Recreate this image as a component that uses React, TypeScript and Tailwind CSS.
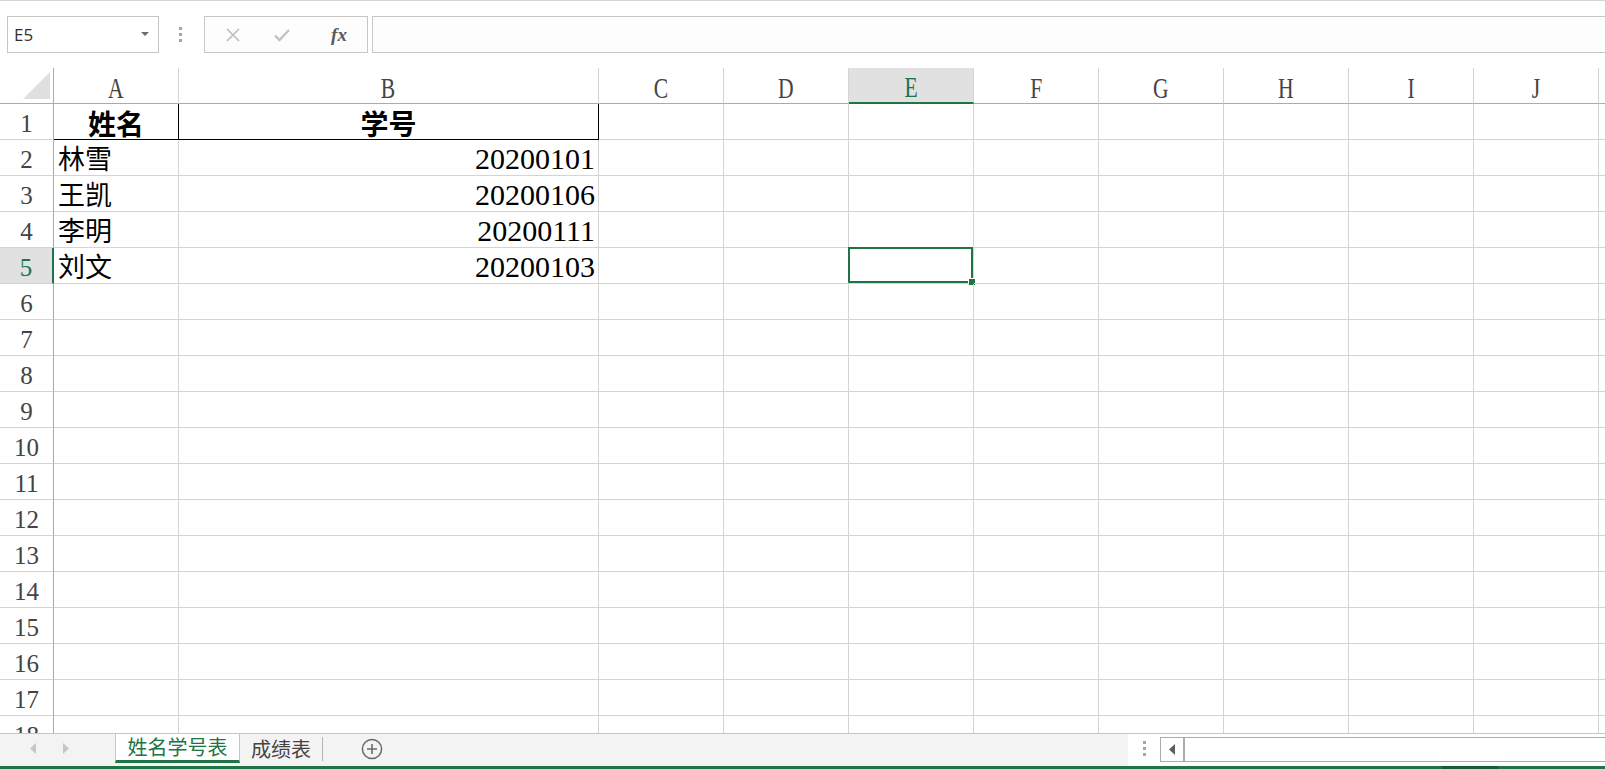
import React from 'react';

const COLUMNS = [
  { key: 'A', width: 'w-[125px]' },
  { key: 'B', width: 'w-[420px]' },
  { key: 'C', width: 'w-[125px]' },
  { key: 'D', width: 'w-[125px]' },
  { key: 'E', width: 'w-[125px]' },
  { key: 'F', width: 'w-[125px]' },
  { key: 'G', width: 'w-[125px]' },
  { key: 'H', width: 'w-[125px]' },
  { key: 'I', width: 'w-[125px]' },
  { key: 'J', width: 'w-[125px]' },
];

const STUDENTS = [
  { name: '林雪', id: '20200101' },
  { name: '王凯', id: '20200106' },
  { name: '李明', id: '20200111' },
  { name: '刘文', id: '20200103' },
];

const ROWS = Array.from({ length: 18 }, (_, i) => i + 1);
const ACTIVE_ROW = 5;
const ACTIVE_COL = 'E';

function FormulaBar() {
  return (
    <div className="h-[68px] shrink-0 border-t border-[#d5d5d5] flex items-start pt-[15px] bg-white">
      <div className="ml-[7px] w-[152px] h-[37px] shrink-0 border border-[#c6c6c6] flex items-center pl-[6px] pr-[9px]">
        <span className="flex-1 text-[17px] text-[#333] font-['Open_Sans',sans-serif] leading-none">E5</span>
        <svg width="8" height="5" viewBox="0 0 8 5">
          <polygon points="0,0 8,0 4,4" fill="#6d6d6d" />
        </svg>
      </div>
      <div className="w-[45px] h-[37px] shrink-0 flex flex-col items-center justify-center gap-[3px] pr-[3px]">
        <span className="w-[3px] h-[3px] bg-[#a6a6a6]" />
        <span className="w-[3px] h-[3px] bg-[#a6a6a6]" />
        <span className="w-[3px] h-[3px] bg-[#a6a6a6]" />
      </div>
      <div className="w-[164px] h-[37px] shrink-0 border border-[#c6c6c6] bg-[#fdfdfd] flex items-center">
        <div className="ml-[16px] w-[24px] flex justify-center">
          <svg width="16" height="16" viewBox="0 0 16 16">
            <path d="M2 2 L14 14 M14 2 L2 14" stroke="#bdbdbd" strokeWidth="1.6" fill="none" />
          </svg>
        </div>
        <div className="ml-[25px] w-[24px] flex justify-center">
          <svg width="18" height="16" viewBox="0 0 18 16">
            <path d="M2 8.5 L6.5 13 L16 3" stroke="#c2c2c2" strokeWidth="2.4" fill="none" />
          </svg>
        </div>
        <div className="ml-[33px] w-[24px] flex justify-center">
          <span className="font-['Liberation_Serif',serif] italic font-bold text-[19px] text-[#5a5a5a] leading-none">fx</span>
        </div>
      </div>
      <div className="ml-[4px] flex-1 h-[37px] border border-r-0 border-[#c6c6c6] bg-[#fdfdfd]" />
    </div>
  );
}

function ColumnHeader() {
  return (
    <div className="flex h-[36px] shrink-0">
      <div className="w-[54px] shrink-0 border-r border-b border-[#ababab] flex items-end justify-end pr-[3px] pb-[4px]">
        <svg width="27" height="27" viewBox="0 0 27 27">
          <polygon points="27,0 27,27 0,27" fill="#dfdfdf" />
        </svg>
      </div>
      {COLUMNS.map((c) => {
        const active = c.key === ACTIVE_COL;
        return (
          <div
            key={c.key}
            className={`${c.width} shrink-0 border-r border-r-[#d4d4d4] flex items-end justify-center overflow-hidden ${
              active ? 'bg-[#e1e1e1] border-b-2 border-b-[#217346] text-[#217346]' : 'border-b border-b-[#ababab] text-[#444]'
            }`}
          >
            <span className="font-['Liberation_Serif',serif] text-[30px] leading-none scale-x-[0.72]">{c.key}</span>
          </div>
        );
      })}
      <div className="flex-1 min-w-0 border-b border-[#ababab]" />
    </div>
  );
}

function Cell({ row, col }: { row: number; col: string }) {
  const header = row === 1 && (col === 'A' || col === 'B');
  const student = row >= 2 && row <= 5 ? STUDENTS[row - 2] : null;
  const base = `relative shrink-0 border-r border-b flex items-end overflow-visible ${
    header ? 'border-black' : 'border-[#d4d4d4]'
  }`;
  const width = COLUMNS.find((c) => c.key === col)!.width;

  let content: React.ReactNode = null;
  let align = '';
  if (header) {
    align = 'justify-center pb-[2px]';
    content = (
      <span className="font-['Noto_Sans_CJK_SC',sans-serif] font-bold text-[28px] leading-none text-black">
        {col === 'A' ? '姓名' : '学号'}
      </span>
    );
  } else if (student && col === 'A') {
    align = 'justify-start pl-[4px] pb-[4px]';
    content = (
      <span className="font-['Noto_Sans_CJK_SC',sans-serif] text-[27px] leading-none text-black">{student.name}</span>
    );
  } else if (student && col === 'B') {
    align = 'justify-end pr-[3px] pb-[1px]';
    content = (
      <span className="font-['Liberation_Serif',serif] text-[30px] leading-none text-black">{student.id}</span>
    );
  }

  const selected = row === ACTIVE_ROW && col === ACTIVE_COL;

  return (
    <div className={`${width} ${base} ${align}`}>
      {content}
      {selected && (
        <div className="absolute -left-px -top-px right-0 bottom-0 border-2 border-[#217346] pointer-events-none">
          <div className="absolute -right-[5px] -bottom-[5px] w-[8px] h-[8px] bg-[#217346] border border-white" />
        </div>
      )}
    </div>
  );
}

function SheetGrid() {
  return (
    <div className="flex-1 min-h-0 overflow-hidden flex flex-col bg-white">
      <ColumnHeader />
      {ROWS.map((r) => {
        const active = r === ACTIVE_ROW;
        return (
          <div key={r} className="flex h-[36px] shrink-0">
            <div
              className={`w-[54px] shrink-0 flex items-end justify-center pb-[3px] border-b border-b-[#d4d4d4] font-['Liberation_Serif',serif] text-[25px] leading-none ${
                active ? 'bg-[#e1e1e1] text-[#217346] border-r-2 border-r-[#217346]' : 'text-[#444] border-r border-r-[#ababab]'
              }`}
            >
              {r}
            </div>
            {COLUMNS.map((c) => (
              <Cell key={c.key} row={r} col={c.key} />
            ))}
            <div className="flex-1 min-w-0 border-b border-[#d4d4d4]" />
          </div>
        );
      })}
    </div>
  );
}

function SheetTabs() {
  return (
    <div className="h-[33px] shrink-0 border-t border-[#c6c6c6] bg-[#f3f3f3] flex items-start">
      <div className="w-[115px] h-[29px] shrink-0 flex items-center pl-[30px]">
        <svg width="6" height="11" viewBox="0 0 6 11">
          <polygon points="6,0 6,11 0,5.5" fill="#c6c6c6" />
        </svg>
        <svg width="6" height="11" viewBox="0 0 6 11" className="ml-[27px]">
          <polygon points="0,0 0,11 6,5.5" fill="#c6c6c6" />
        </svg>
      </div>
      <div className="w-[125px] h-[29px] shrink-0 bg-white border-x border-[#c6c6c6] border-b-[3px] border-b-[#217346] flex items-center justify-center">
        <span className="font-['Noto_Sans_CJK_SC',sans-serif] text-[20px] leading-none text-[#217346]">姓名学号表</span>
      </div>
      <div className="w-[82px] h-[29px] shrink-0 flex items-center justify-center">
        <span className="font-['Noto_Sans_CJK_SC',sans-serif] text-[20px] leading-none text-[#444]">成绩表</span>
      </div>
      <div className="w-px h-[24px] mt-[3px] bg-[#b4b4b4] shrink-0" />
      <div className="ml-[38px] h-[29px] flex items-center shrink-0">
        <svg width="22" height="22" viewBox="0 0 22 22">
          <circle cx="11" cy="11" r="9.6" stroke="#6a6a6a" strokeWidth="1.5" fill="none" />
          <path d="M11 6 V16 M6 11 H16" stroke="#6a6a6a" strokeWidth="1.6" />
        </svg>
      </div>
      <div className="flex-1" />
      <div className="w-[477px] h-[32px] shrink-0 bg-white flex items-start">
        <div className="w-[32px] h-[29px] flex flex-col items-center justify-center gap-[3px]">
          <span className="w-[3px] h-[3px] bg-[#a6a6a6]" />
          <span className="w-[3px] h-[3px] bg-[#a6a6a6]" />
          <span className="w-[3px] h-[3px] bg-[#a6a6a6]" />
        </div>
        <div className="flex-1 mt-[3px] h-[25px] border border-r-0 border-[#ababab] flex">
          <div className="w-[22px] flex items-center justify-center">
            <svg width="6" height="11" viewBox="0 0 6 11">
              <polygon points="6,0 6,11 0,5.5" fill="#5f5f5f" />
            </svg>
          </div>
          <div className="w-[2px] bg-[#ababab]" />
          <div className="flex-1 bg-white" />
        </div>
      </div>
    </div>
  );
}

export default function App() {
  return (
    <div className="w-[1605px] h-[769px] flex flex-col overflow-hidden bg-white">
      <FormulaBar />
      <SheetGrid />
      <SheetTabs />
      <div className="h-[3px] shrink-0 flex bg-[#217346]">
        <div className="w-[1442px]" />
        <div className="w-[56px] bg-[#185c37]" />
      </div>
    </div>
  );
}
